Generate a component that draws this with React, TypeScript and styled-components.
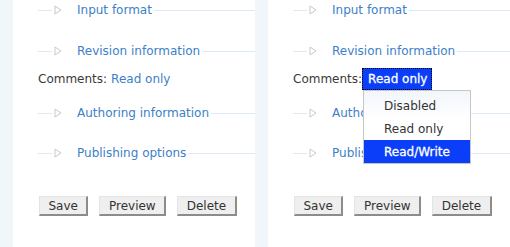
import styled, { createGlobalStyle } from 'styled-components';

const GlobalStyle = createGlobalStyle`
  html, body {
    margin: 0;
    padding: 0;
    background: #ffffff;
  }
  body {
    font-family: "DejaVu Sans", Verdana, sans-serif;
    font-size: 12px;
    color: #333333;
  }
`;

const Page = styled.div`
  display: grid;
  grid-template-columns: 13px 242px 13px 242px;
  width: 510px;
  height: 247px;
  overflow: hidden;
`;

const Strip = styled.div`
  background: #f1f6fb;
`;

const Panel = styled.div`
  position: relative;
  display: flex;
  flex-direction: column;
  padding: 0 0 0 25px;
  background: #ffffff;
`;

const LegendRow = styled.div<{ $top: number }>`
  display: flex;
  align-items: center;
  height: 20px;
  margin-top: ${(p) => p.$top}px;
`;

const Rule = styled.span<{ $grow?: boolean }>`
  height: 1px;
  background: #dde9f5;
  width: 14px;
  flex: ${(p) => (p.$grow ? '1' : 'none')};
  margin-left: ${(p) => (p.$grow ? '2px' : '0')};
`;

const Arrow = styled.svg`
  width: 8px;
  height: 10px;
  margin: 0 15px 0 2px;
  flex: none;
`;

const LegendLink = styled.a`
  color: #3c80c8;
  text-decoration: none;
  white-space: nowrap;
`;

const CommentRow = styled.div`
  position: relative;
  display: flex;
  align-items: center;
  height: 22px;
  margin-top: 7px;
  white-space: nowrap;
`;

const Label = styled.span`
  color: #3a3a3a;
`;

const ValueLink = styled.a`
  color: #3c80c8;
  text-decoration: none;
  margin-left: 4px;
`;

const SelectBox = styled.span`
  display: flex;
  align-items: center;
  height: 20px;
  padding: 0 4px 0 5px;
  background: #0a3ef8;
  color: #ffffff;
  border: 1px dotted #000000;
  -webkit-text-stroke: 0.3px #ffffff;
`;

const Menu = styled.ul`
  position: absolute;
  left: 70px;
  top: 22px;
  width: 106px;
  margin: 0;
  padding: 3px 0 0;
  list-style: none;
  background: linear-gradient(#f2f6fb, #ffffff 40%);
  border: 1px solid #c6c6c6;
  z-index: 2;
`;

const MenuItem = styled.li<{ $active?: boolean }>`
  display: flex;
  align-items: center;
  height: 23px;
  padding-left: 20px;
  color: ${(p) => (p.$active ? '#ffffff' : '#333333')};
  background: ${(p) => (p.$active ? '#0a3ef8' : 'transparent')};
  -webkit-text-stroke: ${(p) => (p.$active ? '0.3px #ffffff' : '0')};
`;

const Buttons = styled.div`
  display: flex;
  gap: 11px;
  margin-top: 33px;
  padding-left: 1px;
`;

const Button = styled.button`
  height: 20px;
  padding: 0 8.5px;
  font-family: "DejaVu Sans", Verdana, sans-serif;
  font-size: 12px;
  color: #333333;
  background: #efefef;
  border-style: solid;
  border-width: 1px 2px 2px 1px;
  border-color: #e4e4e4 #8c8c8c #8c8c8c #e4e4e4;
  border-radius: 0;
`;

const Legend = ({ text, top }: { text: string; top: number }) => (
  <LegendRow $top={top}>
    <Rule />
    <Arrow viewBox="0 0 8 10">
      <path d="M1 1 L7 5 L1 9 Z" fill="none" stroke="#c8c8c8" strokeWidth="1" />
    </Arrow>
    <LegendLink>{text}</LegendLink>
    <Rule $grow />
  </LegendRow>
);

const Form = ({ open }: { open: boolean }) => (
  <Panel>
    <Legend text="Input format" top={0} />
    <Legend text="Revision information" top={21} />
    <CommentRow>
      <Label>Comments:</Label>
      {open ? (
        <>
          <SelectBox>Read only</SelectBox>
          <Menu>
            <MenuItem>Disabled</MenuItem>
            <MenuItem>Read only</MenuItem>
            <MenuItem $active>Read/Write</MenuItem>
          </Menu>
        </>
      ) : (
        <ValueLink>Read only</ValueLink>
      )}
    </CommentRow>
    <Legend text="Authoring information" top={13} />
    <Legend text="Publishing options" top={20} />
    <Buttons>
      <Button>Save</Button>
      <Button>Preview</Button>
      <Button>Delete</Button>
    </Buttons>
  </Panel>
);

export default function App() {
  return (
    <>
      <GlobalStyle />
      <Page>
        <Strip />
        <Form open={false} />
        <Strip />
        <Form open />
      </Page>
    </>
  );
}
